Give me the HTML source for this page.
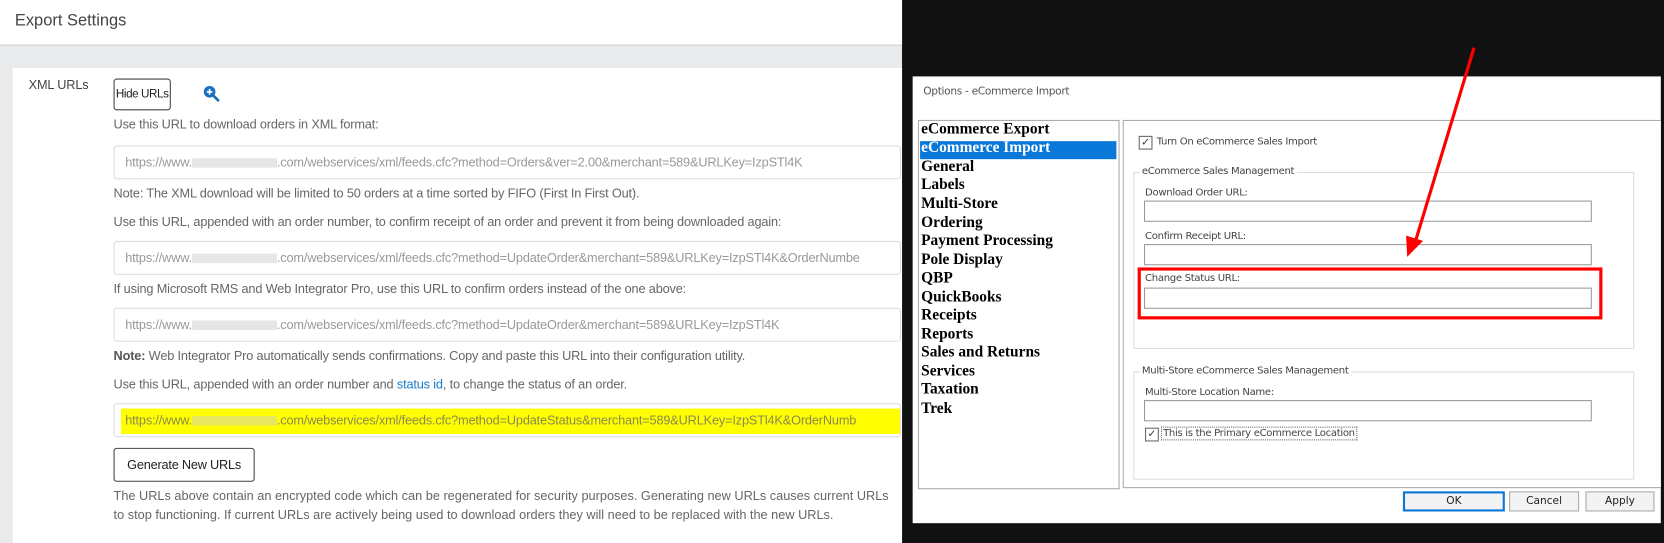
<!DOCTYPE html>
<html><head><meta charset="utf-8"><style>
html,body{margin:0;padding:0;width:1664px;height:543px;overflow:hidden;background:#111;}
#w{position:absolute;left:0;top:0;width:1568px;height:512px;transform:scale(1.06122);transform-origin:0 0;font-family:"Liberation Sans",sans-serif;}
.a{position:absolute;white-space:nowrap;}
.t{font-size:12px;color:#666;letter-spacing:-0.15px;}
.box{position:absolute;left:107px;width:740px;border:1px solid #ddd;border-radius:3px;background:#fff;height:30px;}
.url{position:absolute;left:10px;top:8px;font-size:12px;color:#999;letter-spacing:-0.15px;white-space:nowrap;}
.blur{display:inline-block;width:80px;height:9px;background:#e6e6e6;vertical-align:middle;}
.btn{position:absolute;border:1px solid #444;border-radius:3px;background:#fff;font-size:12px;color:#222;text-align:center;white-space:nowrap;letter-spacing:-0.2px;}
.li{position:absolute;left:868px;font-family:"Liberation Serif",serif;font-weight:bold;font-size:14.5px;color:#000;}
.d{font-family:"DejaVu Sans",sans-serif;font-size:9.5px;color:#444;letter-spacing:-0.3px;}
.in{position:absolute;border:1px solid #999;background:#fff;height:18px;}
.wb{position:absolute;border:1px solid #aaa;background:#f3f3f3;font-family:"DejaVu Sans",sans-serif;font-size:10px;color:#222;text-align:center;line-height:17px;height:17px;}
</style></head><body><div id="w">
<div class="a" style="left:0;top:0;width:850px;height:512px;background:#e9eaec;"></div>
<div class="a" style="left:0;top:0;width:850px;height:42px;background:#fff;border-bottom:1px solid #d0d0d0;"></div>
<div class="a" style="left:14px;top:11px;font-size:15.5px;color:#444;">Export Settings</div>
<div class="a" style="left:12px;top:64px;width:838px;height:448px;background:#fff;"></div>
<div class="a t" style="left:27px;top:73px;color:#444;">XML URLs</div>
<div class="btn" style="left:107px;top:74px;width:52px;height:28px;line-height:28px;font-size:11px;letter-spacing:-0.4px;">Hide URLs</div>
<svg class="a" style="left:191px;top:80px" width="16" height="16" viewBox="0 0 16 16"><circle cx="6.5" cy="6.5" r="5.5" fill="#1a6fc0"/><path d="M10.5 10.5L14.5 14.5" stroke="#1a6fc0" stroke-width="2.5" stroke-linecap="round"/><path d="M6.5 3.8v5.4M3.8 6.5h5.4" stroke="#fff" stroke-width="1.6"/></svg>
<div class="a t" style="left:107px;top:110px;">Use this URL to download orders in XML format:</div>
<div class="box" style="top:137px;"><div class="url">https://www.<span class="blur"></span>.com/webservices/xml/feeds.cfc?method=Orders&amp;ver=2.00&amp;merchant=589&amp;URLKey=IzpSTl4K</div></div>
<div class="a t" style="left:107px;top:175px;">Note: The XML download will be limited to 50 orders at a time sorted by FIFO (First In First Out).</div>
<div class="a t" style="left:107px;top:202px;">Use this URL, appended with an order number, to confirm receipt of an order and prevent it from being downloaded again:</div>
<div class="box" style="top:227px;overflow:hidden;"><div class="url">https://www.<span class="blur"></span>.com/webservices/xml/feeds.cfc?method=UpdateOrder&amp;merchant=589&amp;URLKey=IzpSTl4K&amp;OrderNumbe</div></div>
<div class="a t" style="left:107px;top:265px;">If using Microsoft RMS and Web Integrator Pro, use this URL to confirm orders instead of the one above:</div>
<div class="box" style="top:290px;"><div class="url">https://www.<span class="blur"></span>.com/webservices/xml/feeds.cfc?method=UpdateOrder&amp;merchant=589&amp;URLKey=IzpSTl4K</div></div>
<div class="a t" style="left:107px;top:328px;"><b style="color:#555">Note:</b> Web Integrator Pro automatically sends confirmations. Copy and paste this URL into their configuration utility.</div>
<div class="a t" style="left:107px;top:355px;">Use this URL, appended with an order number and <span style="color:#1a7ac8">status id</span>, to change the status of an order.</div>
<div class="box" style="top:380px;overflow:hidden;"><div style="position:absolute;left:6px;top:4px;right:0;height:24px;background:#ffff00;"></div><div class="url" style="color:#8a8a50">https://www.<span class="blur" style="background:#e8e860"></span>.com/webservices/xml/feeds.cfc?method=UpdateStatus&amp;merchant=589&amp;URLKey=IzpSTl4K&amp;OrderNumb</div></div>
<div class="btn" style="left:107px;top:422px;width:131px;height:30px;line-height:30px;">Generate New URLs</div>
<div class="a t" style="left:107px;top:460px;letter-spacing:0px;">The URLs above contain an encrypted code which can be regenerated for security purposes. Generating new URLs causes current URLs</div>
<div class="a t" style="left:107px;top:478px;letter-spacing:0px;">to stop functioning. If current URLs are actively being used to download orders they will need to be replaced with the new URLs.</div>

<div class="a" style="left:860px;top:72px;width:705px;height:421px;background:#fff;"></div>
<div class="a d" style="left:870px;top:81px;font-size:10px;color:#555;">Options - eCommerce Import</div>
<div class="a" style="left:865px;top:113px;width:188px;height:346px;border:1px solid #aaa;background:#fff;"></div>
<div class="a" style="left:867px;top:133px;width:185px;height:17px;background:#0a78d8;"></div>
<div class="li" style="top:114px">eCommerce Export</div>
<div class="li" style="top:131px;color:#fff">eCommerce Import</div>
<div class="li" style="top:149px">General</div>
<div class="li" style="top:166px">Labels</div>
<div class="li" style="top:184px">Multi-Store</div>
<div class="li" style="top:202px">Ordering</div>
<div class="li" style="top:219px">Payment Processing</div>
<div class="li" style="top:237px">Pole Display</div>
<div class="li" style="top:254px">QBP</div>
<div class="li" style="top:272px">QuickBooks</div>
<div class="li" style="top:289px">Receipts</div>
<div class="li" style="top:307px">Reports</div>
<div class="li" style="top:324px">Sales and Returns</div>
<div class="li" style="top:342px">Services</div>
<div class="li" style="top:359px">Taxation</div>
<div class="li" style="top:377px">Trek</div>
<div class="a" style="left:1058px;top:113px;width:506px;height:345px;border:1px solid #aaa;border-right:none;background:#fff;"></div>
<div class="a" style="left:1073px;top:128px;width:11px;height:11px;border:1px solid #666;font-size:10px;line-height:11px;text-align:center;color:#333;">✓</div>
<div class="a d" style="left:1090px;top:128px;">Turn On eCommerce Sales Import</div>
<div class="a" style="left:1068px;top:162px;width:470px;height:165px;border:1px solid #ddd;"></div>
<div class="a d" style="left:1074px;top:156px;background:#fff;padding:0 2px;">eCommerce Sales Management</div>
<div class="a d" style="left:1079px;top:176px;">Download Order URL:</div>
<div class="in" style="left:1078px;top:189px;width:420px;"></div>
<div class="a d" style="left:1079px;top:217px;">Confirm Receipt URL:</div>
<div class="in" style="left:1078px;top:230px;width:420px;"></div>
<div class="a d" style="left:1079px;top:257px;">Change Status URL:</div>
<div class="in" style="left:1078px;top:271px;width:420px;"></div>
<div class="a" style="left:1072px;top:252px;width:432px;height:43px;border:3px solid #f00;"></div>
<div class="a" style="left:1068px;top:350px;width:470px;height:100px;border:1px solid #ddd;"></div>
<div class="a d" style="left:1074px;top:344px;background:#fff;padding:0 2px;">Multi-Store eCommerce Sales Management</div>
<div class="a d" style="left:1079px;top:364px;">Multi-Store Location Name:</div>
<div class="in" style="left:1078px;top:377px;width:420px;"></div>
<div class="a" style="left:1079px;top:403px;width:11px;height:11px;border:1px solid #666;font-size:10px;line-height:11px;text-align:center;color:#333;">✓</div>
<div class="a d" style="left:1094px;top:402px;border:1px dotted #666;padding:0 1px;">This is the Primary eCommerce Location</div>
<div class="wb" style="left:1322px;top:463px;width:92px;border:2px solid #0a78d8;height:15px;line-height:15px;">OK</div>
<div class="wb" style="left:1422px;top:463px;width:64px;">Cancel</div>
<div class="wb" style="left:1494px;top:463px;width:63px;">Apply</div>
<svg class="a" style="left:0;top:0" width="1568" height="512"><path d="M1389 45L1333 230" stroke="#f00" stroke-width="3"/><path d="M1326 242L1325 222L1341 227Z" fill="#f00"/></svg>
</div></body></html>
